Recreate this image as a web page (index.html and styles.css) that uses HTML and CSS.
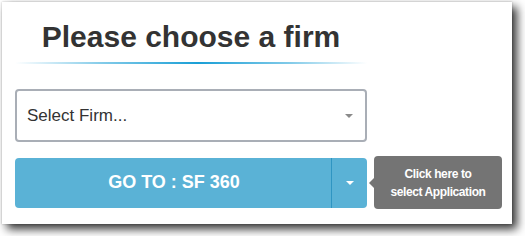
FILE: index.html
```html
<!DOCTYPE html>
<html>
<head>
<meta charset="utf-8">
<link rel="stylesheet" href="styles.css">
</head>
<body>
<div class="panel">
  <div class="column">
    <h1 class="title">Please choose a firm</h1>
    <div class="rule"></div>
    <div class="select">
      <span class="select-text">Select Firm...</span>
      <span class="caret caret-gray"></span>
    </div>
    <div class="action-row">
      <div class="btn-group">
        <button class="btn-main">GO TO : SF 360</button>
        <button class="btn-toggle"><span class="caret caret-white"></span></button>
      </div>
      <div class="tooltip">Click here to<br>select Application</div>
    </div>
  </div>
</div>
</body>
</html>
```

FILE: styles.css
```css
html, body {
  margin: 0;
  padding: 0;
  background: #ffffff;
  width: 525px;
  height: 236px;
  overflow: hidden;
  font-family: "Liberation Sans", Arial, sans-serif;
}

.panel {
  margin: 2px 0 0 2px;
  width: 510px;
  height: 222px;
  background: #ffffff;
  box-shadow: 0 0 2px rgba(0, 0, 0, 0.25), 5px 5px 9px rgba(0, 0, 0, 0.8);
  padding: 17px 0 0 13px;
  box-sizing: border-box;
}

.column {
  width: 490px;
}

.title {
  margin: 0;
  width: 352px;
  text-align: center;
  font-size: 30px;
  line-height: 36px;
  font-weight: bold;
  color: #333333;
}

.rule {
  margin-top: 7px;
  width: 352px;
  height: 2px;
  background: linear-gradient(to right, rgba(26, 159, 214, 0) 0%, rgba(26, 159, 214, 0.55) 25%, #1a9fd6 52%, rgba(26, 159, 214, 0.55) 78%, rgba(26, 159, 214, 0) 100%);
}

.select {
  margin-top: 25px;
  width: 352px;
  height: 53px;
  box-sizing: border-box;
  border: 2px solid #a9aeb6;
  border-radius: 4px;
  display: flex;
  align-items: center;
  justify-content: space-between;
  padding: 0 12px 0 10px;
}

.select-text {
  font-size: 17px;
  color: #333333;
}

.caret {
  width: 0;
  height: 0;
  border-left: 4px solid transparent;
  border-right: 4px solid transparent;
  border-top: 4px solid;
}

.caret-gray {
  border-top-color: #8a8a8a;
}

.caret-white {
  border-top-color: #ffffff;
  display: inline-block;
}

.action-row {
  margin-top: 14px;
  display: flex;
  align-items: center;
  gap: 7px;
}

.btn-group {
  display: flex;
  width: 352px;
  height: 50px;
}

.btn-main {
  width: 317px;
  border: 0;
  border-right: 1px solid #2f95c2;
  background: #5ab2d6;
  color: #ffffff;
  font-family: "Liberation Sans", Arial, sans-serif;
  font-size: 18px;
  font-weight: bold;
  border-radius: 4px 0 0 4px;
  padding: 0 0 0 2px;
}

.btn-toggle {
  width: 35px;
  border: 0;
  background: #5ab2d6;
  border-radius: 0 4px 4px 0;
  padding: 0;
  display: flex;
  align-items: center;
  justify-content: center;
}

.tooltip {
  position: relative;
  width: 128px;
  height: 53px;
  box-sizing: border-box;
  background: #747474;
  border-radius: 4px;
  color: #ffffff;
  font-size: 12px;
  letter-spacing: -0.4px;
  font-weight: bold;
  line-height: 18px;
  text-align: center;
  display: flex;
  align-items: center;
  justify-content: center;
  padding-top: 1px;
}

.tooltip::before {
  content: "";
  position: absolute;
  left: -5px;
  top: 50%;
  margin-top: -5px;
  border-top: 5px solid transparent;
  border-bottom: 5px solid transparent;
  border-right: 5px solid #747474;
}
```
